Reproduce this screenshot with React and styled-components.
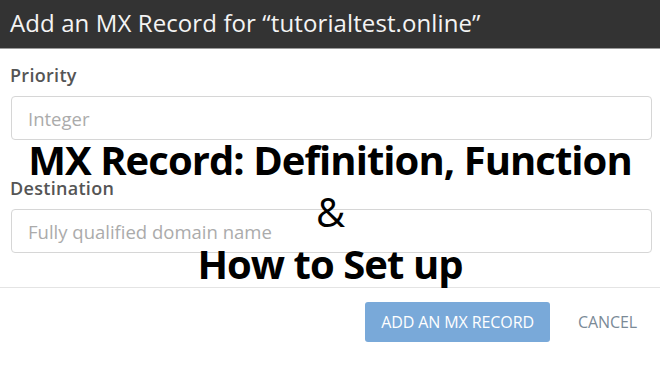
import React from "react";
import styled, { createGlobalStyle } from "styled-components";

const GlobalStyle = createGlobalStyle`
	body {
		margin: 0;
		background: #ffffff;
		font-family: "Open Sans", "Noto Sans", sans-serif;
	}
`;

const App = () => {
	return (
		<Page>
			<GlobalStyle />
			<Header>
				<Title>Add an MX Record for “tutorialtest.online”</Title>
			</Header>

			<Form>
				<Field>
					<Label>Priority</Label>
					<Input placeholder="Integer" />
				</Field>
				<Field>
					<Label>Destination</Label>
					<Input placeholder="Fully qualified domain name" />
				</Field>
			</Form>

			<Footer>
				<PrimaryButton>Add an MX Record</PrimaryButton>
				<LinkButton>Cancel</LinkButton>
			</Footer>

			{/* banner text laid over the dialog */}
			<Overlay>
				<Headline>MX Record: Definition, Function</Headline>
				<Headline $light>&amp;</Headline>
				<Headline>How to Set up</Headline>
			</Overlay>
		</Page>
	);
};

export default App;

const Page = styled.div`
	position: relative;
	width: 660px;
	height: 371px;
	overflow: hidden;
	background: #ffffff;
`;

const Header = styled.div`
	height: 49px;
	background: #333333;
	border-bottom: 1px solid #9a9a9a;
	padding: 7px 10px 0;
	box-sizing: border-box;
`;

const Title = styled.h1`
	margin: 0;
	color: #f4f4f4;
	font-size: 24px;
	font-weight: 400;
	line-height: 32px;
	letter-spacing: 0.1px;
	white-space: nowrap;
`;

const Form = styled.div`
	display: flex;
	flex-direction: column;
	gap: 36px;
	padding: 14px 8px 34px 11px;
	border-bottom: 1px solid #e4e4e4;
`;

const Field = styled.div`
	display: flex;
	flex-direction: column;
	gap: 9px;
`;

const Label = styled.label`
	color: #555555;
	font-size: 18px;
	font-weight: 600;
	line-height: 24px;
	letter-spacing: 0.3px;
	margin-left: -1px;
`;

const Input = styled.input`
	height: 44px;
	box-sizing: border-box;
	border: 1px solid #d6d6d6;
	border-radius: 4px;
	padding: 0 16px;
	font-family: "Open Sans", sans-serif;
	font-size: 18.5px;
	outline: none;
	&::placeholder {
		color: #ababab;
	}
`;

const Footer = styled.div`
	display: flex;
	justify-content: flex-end;
	align-items: center;
	gap: 28px;
	padding: 14px 23px 0 0;
`;

const PrimaryButton = styled.button`
	width: 185px;
	height: 40px;
	border: 0;
	border-radius: 3px;
	background: #79a9d9;
	color: #ffffff;
	font-family: "Open Sans", sans-serif;
	font-size: 16px;
	font-weight: 400;
	letter-spacing: -0.1px;
	text-transform: uppercase;
`;

const LinkButton = styled.button`
	border: 0;
	padding: 0;
	background: none;
	color: #7b8a97;
	font-family: "Open Sans", sans-serif;
	font-size: 16px;
	letter-spacing: -0.1px;
	text-transform: uppercase;
`;

const Overlay = styled.div`
	position: absolute;
	top: 134px;
	left: 0;
	right: 0;
	display: flex;
	flex-direction: column;
	align-items: center;
	pointer-events: none;
`;

const Headline = styled.div`
	color: #000000;
	font-family: "Open Sans", sans-serif;
	font-size: 40px;
	font-weight: ${(p) => (p.$light ? 400 : 700)};
	line-height: 52px;
	letter-spacing: -0.95px;
	white-space: nowrap;
`;
